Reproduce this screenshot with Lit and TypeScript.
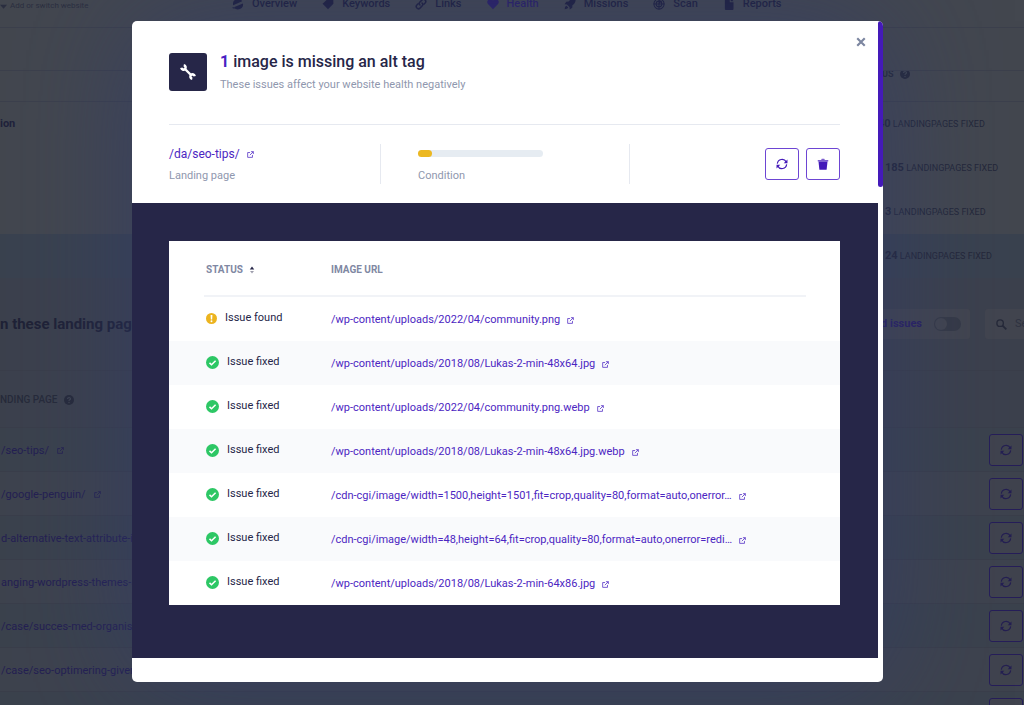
import { LitElement, html, css, svg } from "lit";
import { customElement } from "lit/decorators.js";
import { classMap } from "lit/directives/class-map.js";

const icons: Record<string, any> = {
  overview: svg`<path d="M13.5 4.2A6.6 6.6 0 0 0 1.6 9.5zM2.6 12.2A6.6 6.6 0 0 0 14.6 7.4zM.4 12.8Q.6 15 6 13.6 2.5 14 1.8 12zM15.6 2.2Q15.4.6 11.6 1.6q2.2 0 2.6 1z"/>`,
  tag: svg`<path d="M8 .8l7 .4.2 6.6L8 15 .8 7.8z"/>`,
  link: svg`<g fill="none" stroke="currentColor" stroke-width="2" stroke-linecap="round"><path d="M6.6 9.4a2.9 2.9 0 0 1 0-4.1l2.8-2.8a2.9 2.9 0 0 1 4.1 4.1l-1.7 1.7"/><path d="M9.4 6.6a2.9 2.9 0 0 1 0 4.1l-2.8 2.8a2.9 2.9 0 0 1-4.1-4.1l1.700-1.700"/></g>`,
  heart: svg`<path d="M8 15L1.300 8C-.6 5.900.3 2.100 3.600 1.500 5.500 1.200 7.200 2 8 3.400 8.800 2 10.500 1.200 12.400 1.500c3.300.6 4.200 4.400 2.300 6.500z"/>`,
  rocket: svg`<path d="M15.500.5c-4-.4-7 1-9.300 4.300L3 5 .8 8.300l3.100.4 3.400 3.400.4 3.100L11 13l.2-3.200C14.500 7.500 15.900 4.500 15.500.5zM3.200 10.400C1.600 11 1 13 1 15c2 0 4-.6 4.600-2.200z"/>`,
  radar: svg`<g fill="none" stroke="currentColor" stroke-width="1.400"><circle cx="8" cy="8" r="6.800"/><circle cx="8" cy="8" r="3.800"/><path d="M8 1v14M1 8h14"/></g><path d="M8 8V3l4 1z"/>`,
  file: svg`<path d="M2.500 1.500Q2.500 0 4 0h5v5.500h5V14.500Q14 16 12.500 16H4Q2.500 16 2.500 14.500zM10.300 0L14 4.200h-3.700z"/>`,
  wrench: svg`<g fill="none" stroke="currentColor"><path stroke-width="2.400" d="M5 5l6 6"/><path stroke-width="2.500" d="M1.300 3.700C1.700 5.600 3.600 6.200 5 5 6.200 3.600 5.600 1.700 3.700 1.300M14.700 12.300C14.300 10.400 12.400 9.800 11 11 9.800 12.400 10.400 14.300 12.300 14.700"/></g>`,
  external: svg`<path fill="none" stroke="currentColor" stroke-width="1.700" d="M7 3.500H1.500v11h11V9M9 1.500h5.500V7M14.500 1.500L6.500 9.500"/>`,
  refresh: svg`<g fill="none" stroke="currentColor" stroke-width="1.600"><path d="M1.800 7.500A6.300 6.300 0 0 1 13.600 5.200M14.200 8.500A6.300 6.300 0 0 1 2.400 10.800"/></g><path d="M15.300 2v5h-5zM.7 14V9h5z"/>`,
  trash: svg`<path opacity=".7" d="M1 2.600h4.500L6.300 1h3.400l.8 1.600H15v1.900H1z"/><path d="M2 4.500h12L12.800 15.500H3.200z"/>`,
  close: svg`<path fill="none" stroke="currentColor" stroke-width="3.400" d="M2 2l12 12M14 2L2 14"/>`,
  warn: svg`<circle cx="8" cy="8" r="8"/><path fill="#fff" d="M6.700 3h2.600L9 9.300H7z"/><circle cx="8" cy="11.900" r="1.400" fill="#fff"/>`,
  check: svg`<circle cx="8" cy="8" r="8"/><path fill="none" stroke="#fff" stroke-width="1.900" d="M4.300 8.400l2.500 2.400 5-5"/>`,
  help: svg`<circle cx="8" cy="8" r="8"/><path fill="none" stroke="#3f4451" stroke-width="1.900" d="M5.500 6.300C5.700 3.300 10.500 3.500 10.400 6.200 10.300 7.800 8 7.700 8 9.600"/><circle cx="8" cy="12" r="1.200" fill="#3f4451"/>`,
  search: svg`<g fill="none" stroke="currentColor"><circle cx="6" cy="6" r="4.700" stroke-width="2"/><path stroke-width="2.600" d="M9.500 9.500l5.500 5.500"/></g>`,
  sort: svg`<path d="M8 1l4.500 6h-9z"/><path opacity=".45" d="M8 15l4-5H4z"/>`,
  caret: svg`<path d="M0 4h16L8 13z"/>`,
};

const icon = (name: string, size: string) =>
  html`<svg class="icon ${size}" viewBox="0 0 16 16" fill="currentColor" aria-hidden="true">${icons[name]}</svg>`;

const base = css`
  * { box-sizing: border-box; }
  .icon { display: block; flex: none; }
  .s7 { width: 7px; height: 7px; }
  .s8 { width: 8px; height: 8px; }
  .s10 { width: 10px; height: 10px; }
  .s11 { width: 11px; height: 11px; }
  .s12 { width: 12px; height: 12px; }
  .s13 { width: 13px; height: 13px; }
  .s16 { width: 16px; height: 16px; }
  a { color: inherit; text-decoration: none; }
  button { font: inherit; padding: 0; cursor: pointer; }
`;

@customElement("health-page")
export class HealthPage extends LitElement {
  static styles = [base, css`
    :host { display: block; color: #20223b; font-size: 11px; line-height: 16px; }
    .top { display: flex; align-items: center; height: 31px; margin-top: -3px; padding-bottom: 16px; border-bottom: 1px solid #3c404c; line-height: 12px; }
    .switch { display: flex; align-items: center; gap: 3px; width: 232px; padding-top: 4px; font-size: 8px; line-height: 10px; color: #2b2f40; white-space: nowrap; }
    .nav { display: flex; gap: 25px; font-weight: 500; }
    .nav a { display: flex; align-items: center; gap: 8px; color: #1e1f3c; }
    .nav .current { color: #2a1f66; }
    .bar { height: 43px; border-bottom: 1px solid #3c404c; }
    .heading { display: flex; justify-content: flex-end; height: 31px; overflow: hidden; border-bottom: 1px solid #3c404c; color: #262a3a; font-size: 9px; font-weight: 700; }
    .heading span { display: flex; align-items: center; gap: 7px; width: 142px; height: 6px; }
    .summary { display: flex; justify-content: space-between; align-items: center; height: 44px; }
    .summary.last { background: #3a424f; }
    .summary b { font-weight: 700; }
    .count { width: 139px; font-size: 9px; color: #242739; white-space: nowrap; }
    .count.long { width: 146px; }
    .count b { font-size: 11px; }
    .tools { display: flex; align-items: center; height: 93px; border-bottom: 1px solid #3a3e4a; background: #3c414d; }
    h2 { flex: 1; margin: 0; font-size: 15px; font-weight: 700; line-height: 20px; color: #1f2236; }
    .toggle { display: flex; align-items: center; justify-content: flex-end; gap: 12px; width: 120px; height: 30px; padding-right: 9px; border-radius: 3px; background: #42454f; color: #291f63; font-weight: 700; }
    .toggle input { appearance: none; display: flex; align-items: center; width: 27px; height: 14px; margin: 0; padding: 1px; border-radius: 7px; background: #363a46; }
    .toggle input::before { content: ""; width: 12px; height: 12px; border-radius: 50%; background: #42454f; }
    .search { display: flex; align-items: center; gap: 8px; width: 39px; height: 30px; margin-left: 15px; padding-left: 11px; border-radius: 3px 0 0 3px; background: #42454f; overflow: hidden; color: #262a39; }
    .search input { flex: none; width: 120px; padding: 0; border: 0; background: none; font: inherit; }
    .search input::placeholder { color: #2f3341; opacity: 1; }
    .list { background: #3e434e; }
    .row { display: flex; align-items: center; justify-content: space-between; height: 44px; padding: 0 1px; border-bottom: 1px solid #3a3e4a; color: #241f52; white-space: nowrap; }
    .row:nth-child(odd) { background: #3b424d; }
    .head { display: flex; align-items: center; gap: 6px; height: 57px; padding-top: 2px; font-size: 10px; font-weight: 500; color: #272b3a; border-bottom: 1px solid #3a3e4a; background: #3c414d; }
    .path { display: flex; align-items: center; gap: 8px; padding-top: 2px; }
    .row button { display: grid; place-items: center; width: 34px; height: 32px; border: 1px solid #261e59; border-radius: 3px; background: #40434e; color: #241f52; }
  `];

  nav = [["overview", "Overview"], ["tag", "Keywords"], ["link", "Links"], ["heart", "Health"], ["rocket", "Missions"], ["radar", "Scan"], ["file", "Reports"]];
  counts = [["ion", "40"], ["", "185"], ["", "3"], ["", "24"]];
  pages = ["/seo-tips/", "/google-penguin/", "d-alternative-text-attribute-i", "anging-wordpress-themes-a", "/case/succes-med-organis", "/case/seo-optimering-given", ""];

  render() {
    return html`
      <header class="top">
        <span class="switch">${icon("caret", "s7")}Add or switch website</span>
        <nav class="nav">${this.nav.map(([i, t]) => html`<a href="#" class=${classMap({ current: t === "Health" })}>${icon(i, "s12")}${t}</a>`)}</nav>
      </header>
      <div class="bar"></div>
      <div class="heading"><span>US ${icon("help", "s10")}</span></div>
      ${this.counts.map(([l, n], k) => html`
        <div class=${classMap({ summary: true, last: k === 3 })}>
          <b>${l}</b>
          <span class=${classMap({ count: true, long: k === 0 })}><b>${n}</b> LANDINGPAGES FIXED</span>
        </div>`)}
      <div class="tools">
        <h2>n these landing pages</h2>
        <label class="toggle">d issues<input type="checkbox" /></label>
        <label class="search">${icon("search", "s11")}<input type="text" placeholder="Search" aria-label="Search" /></label>
      </div>
      <div class="head">NDING PAGE ${icon("help", "s10")}</div>
      <div class="list">${this.pages.map((p, k) => html`
        <div class="row">
          <a class="path" href="#">${p}${k < 2 ? icon("external", "s7") : ""}</a>
          <button aria-label="Rescan page">${icon("refresh", "s12")}</button>
        </div>`)}</div>`;
  }
}

@customElement("issue-dialog")
export class IssueDialog extends LitElement {
  static styles = [base, css`
    :host { display: grid; grid-template-columns: minmax(0, 1fr) 5px; width: 100%; max-width: 751px; border-radius: 5px; overflow: hidden; background: #fff; color: #262648; font-size: 11px; line-height: 16px; box-shadow: 0 0 120px rgba(46, 58, 112, 0.62); }
    .content { padding-bottom: 24px; }
    .thumb { height: 166px; border-radius: 3px; background: #441ab9; }
    .intro { padding: 32px 38px 0 37px; }
    .lead { display: flex; align-items: flex-start; gap: 13px; padding-bottom: 33px; border-bottom: 1px solid #e6e9f0; }
    .badge { display: grid; place-items: center; width: 38px; height: 38px; border-radius: 3px; background: #262648; color: #fff; }
    .words { flex: 1; }
    h1 { margin: 0; font-size: 16px; font-weight: 500; line-height: 18px; }
    h1 b { color: #4a1fc4; font-weight: 700; }
    p { margin: 0; color: #8f97ae; }
    .words p { padding-top: 6px; }
    .lead { height: 72px; }
    .close { display: grid; width: 12px; height: 12px; place-items: center; margin: -17px -27px 0 0; border: 0; background: none; color: #7c86a0; }
    .facts { display: grid; grid-template-columns: 212px 249px 1fr; align-items: center; height: 78px; }
    .fact { display: flex; flex-direction: column; justify-content: space-between; height: 40px; border-right: 1px solid #e6e9f0; }
    .fact + .fact { padding: 6px 0 0 37px; }
    .link { display: inline-flex; align-items: center; gap: 7px; color: #4c26c2; }
    .big { font-size: 12px; line-height: 20px; }
    .meter { width: 125px; height: 7px; border-radius: 4px; background: #e6ecf2; }
    .fill { height: 7px; border-radius: 4px; background: #ecb821; }
    .actions { display: flex; justify-content: flex-end; gap: 7px; }
    .actions button { display: grid; place-items: center; width: 34px; height: 32px; border: 1px solid #6d45d3; border-radius: 3px; background: #fff; color: #441ab9; }
    .panel { padding: 38px 38px 53px 37px; background: #262648; }
    table { width: 100%; border-collapse: collapse; table-layout: fixed; background: #fff; }
    .status { width: 162px; }
    thead tr { height: 56px; background: linear-gradient(#f1f3f7, #f1f3f7) 35px 100% / calc(100% - 69px) 2px no-repeat; }
    th { padding: 2px 0 0; text-align: left; font-size: 10px; font-weight: 700; color: #7f88a3; }
    th.status { padding-left: 37px; }
    .sort { display: flex; align-items: center; gap: 5px; }
    .sort .icon { color: #262648; }
    tbody tr { height: 44px; }
    tbody tr:nth-child(even) { background: #f9fafc; }
    td { padding: 2px 0 0; }
    td.status { padding: 0 0 2px 37px; }
    .state { display: flex; align-items: center; gap: 8px; color: #262648; }
    .found .icon { color: #ecb41f; }
    .fixed .icon { color: #2dc765; }
  `];

  rows = [
    "/wp-content/uploads/2022/04/community.png",
    "/wp-content/uploads/2018/08/Lukas-2-min-48x64.jpg",
    "/wp-content/uploads/2022/04/community.png.webp",
    "/wp-content/uploads/2018/08/Lukas-2-min-48x64.jpg.webp",
    "/cdn-cgi/image/width=1500,height=1501,fit=crop,quality=80,format=auto,onerror…",
    "/cdn-cgi/image/width=48,height=64,fit=crop,quality=80,format=auto,onerror=redi…",
    "/wp-content/uploads/2018/08/Lukas-2-min-64x86.jpg",
  ];
  condition = 11;

  render() {
    return html`
      <div class="content">
        <section class="intro">
          <div class="lead">
            <span class="badge">${icon("wrench", "s16")}</span>
            <div class="words">
              <h1><b>1</b> image is missing an alt tag</h1>
              <p>These issues affect your website health negatively</p>
            </div>
            <button class="close" aria-label="Close">${icon("close", "s10")}</button>
          </div>
          <div class="facts">
            <div class="fact"><a class="link big" href="#">/da/seo-tips/ ${icon("external", "s7")}</a><p>Landing page</p></div>
            <div class="fact"><div class="meter"><div class="fill" style="width:${this.condition}%"></div></div><p>Condition</p></div>
            <div class="actions">
              <button aria-label="Rescan">${icon("refresh", "s12")}</button>
              <button aria-label="Delete">${icon("trash", "s12")}</button>
            </div>
          </div>
        </section>
        <section class="panel">
          <table>
            <thead><tr><th class="status"><span class="sort">STATUS ${icon("sort", "s8")}</span></th><th>IMAGE URL</th></tr></thead>
            <tbody>${this.rows.map((u, k) => html`
              <tr>
                <td class="status"><span class="state ${k ? "fixed" : "found"}">${k ? icon("check", "s13") : icon("warn", "s11")}${k ? "Issue fixed" : "Issue found"}</span></td>
                <td><a class="link" href="#">${u}${icon("external", "s7")}</a></td>
              </tr>`)}</tbody>
          </table>
        </section>
      </div>
      <div class="track"><div class="thumb"></div></div>`;
  }
}

@customElement("app-root")
export class AppRoot extends LitElement {
  static styles = css`
    :host { display: block; position: relative; height: 100vh; overflow: hidden; background: #43474f; font-family: Roboto, "Liberation Sans", sans-serif; }
    .overlay { position: absolute; inset: 0; display: flex; justify-content: center; align-items: flex-start; padding: 21px 9px 23px 0; }
  `;
  render() {
    return html`<health-page></health-page><div class="overlay" role="dialog" aria-modal="true"><issue-dialog></issue-dialog></div>`;
  }
}
